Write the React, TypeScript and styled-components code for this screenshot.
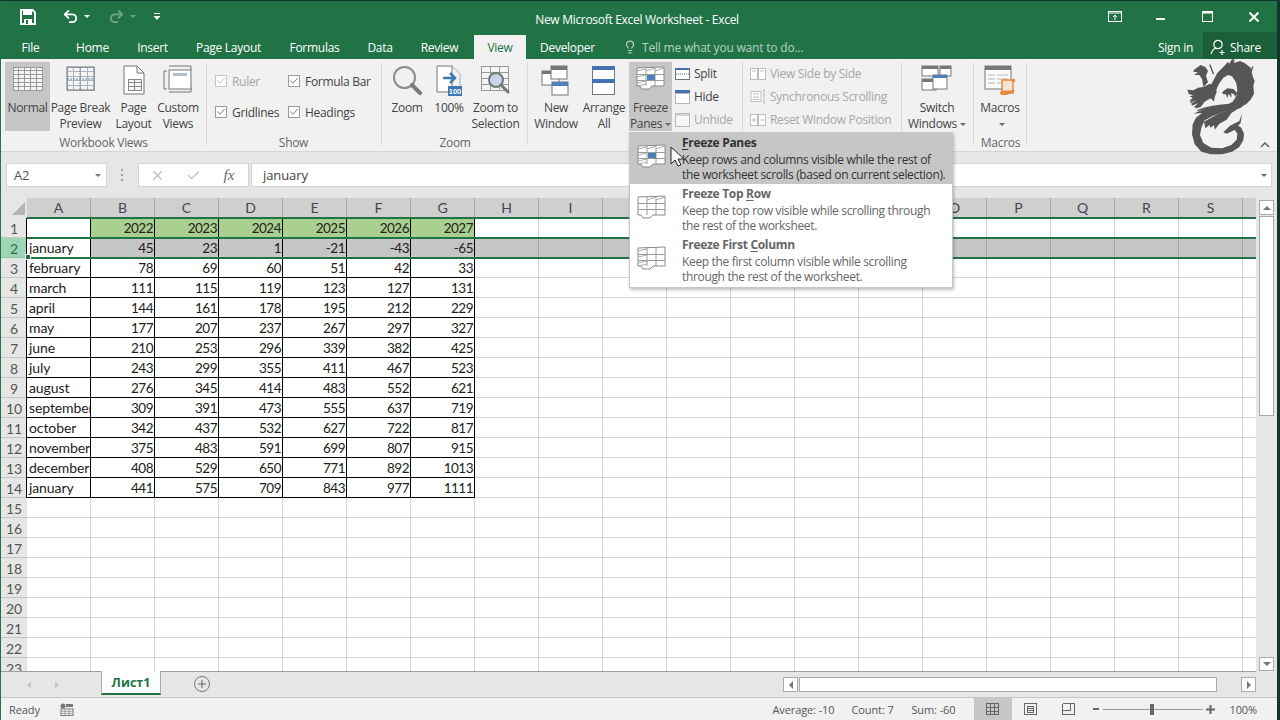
import React from "react";
import styled, { createGlobalStyle } from "styled-components";
import { Undo2, Redo2, Lightbulb, X, Check, Plus } from "lucide-react";

const GlobalStyle = createGlobalStyle`
  html, body { margin: 0; padding: 0; background: #fff; overflow: hidden; }
  * { box-sizing: border-box; }
`;

const UI_FONT = `"Open Sans", "Noto Sans", sans-serif`;
const CELL_FONT = `Lato, "Liberation Sans", sans-serif`;
const GREEN = "#217346";

const Win = styled.div`
  width: 1280px;
  height: 720px;
  display: flex;
  flex-direction: column;
  overflow: hidden;
  background: #f1f1f1;
  border-top: 1px solid #12352c;
  border-left: 1px solid ${GREEN};
  border-right: 3px solid #12352c;
  font-family: ${UI_FONT};
  font-size: 12px;
  color: #444;
`;

const TitleBar = styled.div`
  height: 31px;
  flex: none;
  background: ${GREEN};
  color: #fff;
  display: flex;
  align-items: center;
  position: relative;
`;
const Qat = styled.div`
  display: flex;
  align-items: center;
  padding-left: 19px;
  height: 100%;
`;
const QatSlot = styled.div<{ $w: number; $dim?: boolean }>`
  width: ${(p) => p.$w}px;
  display: flex;
  align-items: center;
  gap: 5px;
  opacity: ${(p) => (p.$dim ? 0.35 : 1)};
`;
const Caret = styled.span<{ $color?: string }>`
  display: inline-block;
  width: 0;
  height: 0;
  border-left: 3px solid transparent;
  border-right: 3px solid transparent;
  border-top: 3px solid ${(p) => p.$color ?? "currentColor"};
`;
const Title = styled.div`
  position: absolute;
  left: 0;
  right: 4px;
  top: 10px;
  text-align: center;
  font-size: 12px;
  letter-spacing: -0.3px;
  color: #fff;
`;
const WinButtons = styled.div`
  margin-left: auto;
  display: flex;
  align-items: center;
`;
const WinButton = styled.div<{ $w: number }>`
  width: ${(p) => p.$w}px;
  display: flex;
  justify-content: center;
`;

const TabRow = styled.div`
  height: 27px;
  flex: none;
  background: ${GREEN};
  color: #fff;
  display: flex;
  align-items: flex-end;
  letter-spacing: -0.28px;
`;
const Tab = styled.div<{ $w: number; $active?: boolean; $gap?: number }>`
  width: ${(p) => p.$w}px;
  margin-left: ${(p) => p.$gap ?? 0}px;
  height: ${(p) => (p.$active ? 24 : 27)}px;
  display: flex;
  align-items: center;
  justify-content: center;
  padding-top: ${(p) => (p.$active ? 0 : 3)}px;
  background: ${(p) => (p.$active ? "#f1f1f1" : "transparent")};
  color: ${(p) => (p.$active ? GREEN : "#fff")};
`;
const TellMe = styled.div`
  display: flex;
  align-items: center;
  gap: 5px;
  height: 27px;
  padding-top: 3px;
  margin-left: 14px;
  color: #b5d0c1;
  letter-spacing: -0.2px;
`;
const SignIn = styled.div`
  margin-left: auto;
  height: 27px;
  padding-top: 3px;
  display: flex;
  align-items: center;
  margin-right: 10px;
`;
const Share = styled.div`
  width: 74px;
  height: 27px;
  padding: 3px 0 0 7px;
  background: #1b5f3a;
  display: flex;
  align-items: center;
  gap: 3px;
`;

const Ribbon = styled.div`
  height: 93px;
  flex: none;
  display: flex;
  position: relative;
  padding: 3px 0 0 4px;
  background: #f1f1f1;
  border-bottom: 1px solid #d6d6d6;
  letter-spacing: -0.3px;
`;
const Group = styled.div<{ $w: number }>`
  width: ${(p) => p.$w}px;
  flex: none;
  display: flex;
  flex-direction: column;
  position: relative;
  &::after {
    content: "";
    position: absolute;
    right: 0;
    top: 1px;
    bottom: 6px;
    width: 1px;
    background: #d8d8d8;
  }
`;
const GroupBody = styled.div<{ $pad?: number }>`
  height: 74px;
  display: flex;
  padding-left: ${(p) => p.$pad ?? 0}px;
`;
const GroupLabel = styled.div<{ $trim?: number }>`
  height: 16px;
  line-height: 16px;
  text-align: center;
  color: #666;
  padding-right: ${(p) => p.$trim ?? 0}px;
`;
const BigButton = styled.div<{ $w: number; $on?: boolean }>`
  width: ${(p) => p.$w}px;
  height: 69px;
  flex: none;
  position: relative;
  background: ${(p) => (p.$on ? "#c6c6c6" : "transparent")};
`;
const IconZone = styled.div`
  height: 38px;
  display: flex;
  align-items: flex-start;
  justify-content: center;
  padding-top: 3px;
`;
const ButtonLabel = styled.div`
  text-align: center;
  line-height: 16px;
  white-space: nowrap;
`;
const DropCaret = styled(Caret)`
  margin-left: 3px;
  vertical-align: 2px;
  color: #666;
`;
const CheckGrid = styled.div`
  display: grid;
  grid-template-columns: 73px auto;
  grid-auto-rows: 30px;
  row-gap: 1px;
  padding: 4px 0 0 8px;
`;
const CheckRow = styled.div<{ $off?: boolean }>`
  display: flex;
  align-items: center;
  gap: 5px;
  color: ${(p) => (p.$off ? "#a6a6a6" : "#444")};
`;
const CheckBox = styled.div<{ $off?: boolean }>`
  width: 12px;
  height: 12px;
  flex: none;
  background: #fff;
  border: 1px solid ${(p) => (p.$off ? "#c6c6c6" : "#9a9a9a")};
  display: flex;
  align-items: center;
  justify-content: center;
  color: ${(p) => (p.$off ? "#b5b5b5" : "#555")};
`;
const SmallColumn = styled.div<{ $w: number; $gap: number; $line?: boolean }>`
  width: ${(p) => p.$w}px;
  margin-left: ${(p) => p.$gap}px;
  height: 69px;
  flex: none;
  ${(p) => (p.$line ? "border-right: 1px solid #d8d8d8;" : "")}
`;
const SmallButton = styled.div<{ $off?: boolean }>`
  height: 23px;
  display: flex;
  align-items: center;
  gap: 3px;
  white-space: nowrap;
  color: ${(p) => (p.$off ? "#a6a6a6" : "#444")};
`;
const DragonSlot = styled.div`
  position: absolute;
  left: 1169px;
  top: -4px;
  width: 110px;
  height: 110px;
  pointer-events: none;
`;
const Collapse = styled.div`
  position: absolute;
  right: 7px;
  bottom: 3px;
  line-height: 0;
`;

const Menu = styled.div`
  position: absolute;
  left: 0;
  top: 70px;
  z-index: 10;
  width: 324px;
  height: 156px;
  background: #fff;
  border: 1px solid #c6c6c6;
  box-shadow: 1px 2px 3px rgba(0, 0, 0, 0.25);
  text-align: left;
  letter-spacing: -0.34px;
`;
const MenuItem = styled.div<{ $on?: boolean }>`
  height: 51px;
  display: flex;
  background: ${(p) => (p.$on ? "#c6c6c6" : "transparent")};
`;
const MenuIcon = styled.div`
  width: 52px;
  flex: none;
  padding: 10px 0 0 7px;
`;
const MenuText = styled.div<{ $on?: boolean }>`
  line-height: 15px;
  color: ${(p) => (p.$on ? "#333" : "#666")};
  padding-top: 2px;
`;
const MenuTitle = styled.div`
  font-weight: 700;
  line-height: 16px;
  margin-bottom: 1px;
  letter-spacing: -0.3px;
  u { text-underline-offset: 2px; }
`;
const MenuLine = styled.div`
  white-space: nowrap;
`;
const Pointer = styled.div`
  position: absolute;
  left: 40px;
  top: 13px;
  line-height: 0;
`;

const FormulaBar = styled.div`
  height: 46px;
  flex: none;
  background: #e6e6e6;
  display: flex;
  padding: 11px 5px 0 5px;
`;
const NameBox = styled.div`
  width: 101px;
  height: 24px;
  background: #fff;
  border: 1px solid #d4d4d4;
  display: flex;
  align-items: center;
  justify-content: space-between;
  padding: 0 5px 0 7px;
  font-size: 13px;
  color: #555;
  letter-spacing: -0.1px;
`;
const GripDots = styled.div`
  width: 31px;
  height: 24px;
  display: flex;
  justify-content: center;
  align-items: center;
  line-height: 0;
`;
const FormulaTools = styled.div`
  width: 111px;
  height: 24px;
  background: #fff;
  border: 1px solid #d4d4d4;
  display: flex;
  align-items: center;
  margin-right: 2px;
`;
const ToolCell = styled.div<{ $w: number }>`
  width: ${(p) => p.$w}px;
  display: flex;
  justify-content: center;
`;
const FxText = styled.span`
  font-family: "Liberation Serif", serif;
  font-style: italic;
  font-size: 15px;
  color: #666;
`;
const FormulaInput = styled.div`
  flex: 1;
  height: 24px;
  background: #fff;
  border: 1px solid #d4d4d4;
  display: flex;
  align-items: center;
  justify-content: space-between;
  padding: 0 4px 0 11px;
  font-size: 13px;
  letter-spacing: -0.1px;
  color: #444;
`;

const SheetArea = styled.div`
  height: 474px;
  flex: none;
  display: flex;
  background: #e6e6e6;
`;
const Sheet = styled.div`
  width: 1255px;
  flex: none;
  overflow: hidden;
  background: #fff;
  border-bottom: 1px solid #9e9e9e;
  font-family: ${CELL_FONT};
  font-size: 14px;
  color: #222;
`;
const HeadRow = styled.div`
  height: 20px;
  display: flex;
  background: #cfcfcf;
  color: #445;
`;
const Corner = styled.div`
  width: 26px;
  flex: none;
  background: #e6e6e6;
  display: flex;
  align-items: flex-end;
  justify-content: flex-end;
  padding: 0 2px 3px 0;
`;
const ColHead = styled.div`
  width: 64px;
  flex: none;
  text-align: center;
  line-height: 20px;
  border-right: 1px solid #a8a8a8;
`;
const Row = styled.div<{ $line?: boolean; $lineBelow?: boolean }>`
  height: 20px;
  display: flex;
  position: relative;
  ${(p) =>
    p.$line
      ? `&::before { content: ""; position: absolute; z-index: 3; left: 26px; right: 0; top: -1px; height: 2px; background: ${GREEN}; }`
      : ""}
  ${(p) =>
    p.$lineBelow
      ? `&::after { content: ""; position: absolute; z-index: 3; left: 26px; right: 0; bottom: -1px; height: 2px; background: ${GREEN}; }`
      : ""}
`;
const RowHead = styled.div<{ $on?: boolean }>`
  width: 26px;
  flex: none;
  text-align: center;
  line-height: 21px;
  background: ${(p) => (p.$on ? "#9fd5b7" : "#e6e6e6")};
  color: ${(p) => (p.$on ? GREEN : "#555")};
  border-bottom: 1px solid ${(p) => (p.$on ? "#8fc5a7" : "#c6c6c6")};
`;
const Cell = styled.div<{ $boxed?: boolean; $tone?: string; $right?: boolean; $first?: boolean }>`
  width: 64px;
  flex: none;
  line-height: ${(p) => (p.$right ? 21 : 20)}px;
  overflow: hidden;
  white-space: nowrap;
  padding: 0 1px 0 2px;
  text-align: ${(p) => (p.$right ? "right" : "left")};
  font-size: ${(p) => (p.$right ? 13.5 : 14)}px;
  letter-spacing: ${(p) => (p.$right ? -0.5 : -0.1)}px;
  background: ${(p) => p.$tone ?? "#fff"};
  border-right: 1px solid ${(p) => (p.$boxed ? "#000" : p.$tone ? "#a6a6a6" : "#d4d4d4")};
  border-bottom: 1px solid ${(p) => (p.$boxed ? "#000" : p.$tone ? "#a6a6a6" : "#d4d4d4")};
  ${(p) => (p.$first ? "box-shadow: -1px 0 0 #000;" : "")}
  position: relative;
`;
const FillHandle = styled.div`
  position: absolute;
  left: 24px;
  top: 16px;
  width: 6px;
  height: 6px;
  background: ${GREEN};
  border: 1px solid #fff;
  z-index: 5;
`;

const VScroll = styled.div`
  flex: 1;
  display: flex;
  flex-direction: column;
  padding: 2px 2px 1px 3px;
`;
const ScrollButton = styled.div<{ $h?: number }>`
  width: 15px;
  height: ${(p) => p.$h ?? 15}px;
  flex: none;
  background: #fff;
  border: 1px solid #ababab;
  display: flex;
  align-items: center;
  justify-content: center;
  color: #777;
`;
const VThumb = styled.div`
  width: 15px;
  height: 200px;
  flex: none;
  background: #fff;
  border: 1px solid #ababab;
  margin-top: 1px;
`;
const VGap = styled.div`
  flex: 1;
`;
const TriUp = styled.span`
  width: 0;
  height: 0;
  border-left: 4px solid transparent;
  border-right: 4px solid transparent;
  border-bottom: 4px solid currentColor;
`;
const TriDown = styled(TriUp)`
  border-bottom: none;
  border-top: 4px solid currentColor;
`;
const TriLeft = styled.span`
  width: 0;
  height: 0;
  border-top: 4px solid transparent;
  border-bottom: 4px solid transparent;
  border-right: 4px solid currentColor;
`;
const TriRight = styled(TriLeft)`
  border-right: none;
  border-left: 4px solid currentColor;
`;

const TabsBar = styled.div`
  height: 26px;
  flex: none;
  background: #e6e6e6;
  border-bottom: 1px solid #c6c6c6;
  display: flex;
  align-items: flex-start;
`;
const NavArrows = styled.div`
  width: 100px;
  height: 25px;
  display: flex;
  align-items: center;
  gap: 24px;
  padding-left: 26px;
  color: #c6c6c6;
`;
const SheetTab = styled.div`
  width: 60px;
  height: 24px;
  padding-top: 1px;
  background: #fff;
  border-bottom: 2px solid ${GREEN};
  border-left: 1px solid #ababab;
  border-right: 1px solid #ababab;
  margin-top: -1px;
  display: flex;
  align-items: center;
  justify-content: center;
  color: ${GREEN};
  font-weight: 700;
  font-size: 12.5px;
`;
const AddSheet = styled.div`
  width: 16px;
  height: 16px;
  margin: 4px 0 0 33px;
  border: 1.5px solid #777;
  border-radius: 50%;
  display: flex;
  align-items: center;
  justify-content: center;
  color: #666;
`;
const HScroll = styled.div`
  margin-left: auto;
  margin-right: 21px;
  display: flex;
  align-items: center;
  height: 25px;
  width: 473px;
`;
const HThumb = styled.div`
  width: 419px;
  height: 15px;
  background: #fff;
  border: 1px solid #ababab;
  margin-left: 1px;
  margin-right: 24px;
`;

const StatusBar = styled.div`
  flex: 1;
  display: flex;
  align-items: center;
  background: #f1f1f1;
  font-size: 11px;
  color: #555;
  padding-left: 8px;
  letter-spacing: -0.1px;
`;
const StatusRight = styled.div`
  margin-left: auto;
  display: flex;
  align-items: center;
  height: 100%;
`;
const StatusText = styled.div<{ $w: number }>`
  width: ${(p) => p.$w}px;
  white-space: nowrap;
`;
const ViewButton = styled.div<{ $on?: boolean }>`
  width: 38px;
  height: 100%;
  display: flex;
  align-items: center;
  justify-content: center;
  background: ${(p) => (p.$on ? "#c6c6c6" : "transparent")};
`;
const Slider = styled.div`
  width: 100px;
  height: 1px;
  background: #9a9a9a;
  margin: 0 1px;
  position: relative;
  &::after {
    content: "";
    position: absolute;
    left: 47px;
    top: -5px;
    width: 4px;
    height: 11px;
    background: #666;
  }
`;
const ZoomLabel = styled.div`
  margin: 0 20px 0 13px;
`;
const ZoomSign = styled.div<{ $gap?: number }>`
  width: 12px;
  margin-left: ${(p) => p.$gap ?? 0}px;
  display: flex;
  justify-content: center;
  color: #666;
  line-height: 0;
`;

/* icons */
const SaveIcon = () => (
  <svg width="16" height="16" viewBox="0 0 16 16">
    <path d="M1 1h11.5L15 3.5V15H1z" fill="none" stroke="#fff" strokeWidth="2" />
    <rect x="3" y="2" width="9" height="4" fill="#fff" />
    <rect x="4" y="10" width="8" height="5" fill="#fff" />
    <rect x="6" y="11" width="2" height="4" fill={GREEN} />
  </svg>
);
const CustomizeIcon = () => (
  <svg width="8" height="8" viewBox="0 0 8 8">
    <rect x="1" y="0" width="6" height="1" fill="#fff" />
    <path d="M0.5 3h7L4 7z" fill="#fff" />
  </svg>
);
const DisplayIcon = () => (
  <svg width="14" height="11" viewBox="0 0 14 11" fill="none" stroke="#fff">
    <rect x="0.5" y="0.5" width="13" height="10" />
    <path d="M0.5 2h13" />
    <path d="M7 9V4M5 6l2-2 2 2" />
  </svg>
);
const MinIcon = () => (
  <svg width="10" height="10" viewBox="0 0 10 10">
    <rect x="0" y="6" width="9" height="2" fill="#fff" />
  </svg>
);
const MaxIcon = () => (
  <svg width="11" height="11" viewBox="0 0 11 11" fill="none" stroke="#fff">
    <rect x="0.5" y="0.5" width="10" height="10" />
    <rect x="0" y="0" width="11" height="2.5" fill="#fff" stroke="none" />
  </svg>
);
const CloseIcon = () => (
  <svg width="10" height="10" viewBox="0 0 10 10" stroke="#fff" strokeWidth="2">
    <path d="M0.5 0.5l9 9M9.5 0.5l-9 9" />
  </svg>
);
const ShareIcon = () => (
  <svg width="17" height="17" viewBox="0 0 17 17" fill="none" stroke="#fff" strokeWidth="1.2">
    <circle cx="8" cy="5.5" r="4.2" />
    <path d="M1 15c1-3 3-5.5 5-6M12 11v5M9.5 13.5h5" />
  </svg>
);

const cols = (x0: number, x1: number, n: number) =>
  Array.from({ length: n + 1 }, (_, i) => x0 + ((x1 - x0) * i) / n);

const SheetGrid = ({ x, y, w, h, c, r, stroke = "#8a8a8a", fill = "#f4f4f4" }: {
  x: number; y: number; w: number; h: number; c: number; r: number; stroke?: string; fill?: string;
}) => (
  <g stroke={stroke} strokeWidth="1" fill="none" shapeRendering="crispEdges">
    <rect x={x} y={y} width={w} height={h} fill={fill} />
    {cols(x, x + w, c).slice(1, -1).map((v) => <path key={v} d={`M${v} ${y}V${y + h}`} />)}
    {cols(y, y + h, r).slice(1, -1).map((v) => <path key={v} d={`M${x} ${v}H${x + w}`} />)}
  </g>
);

const NormalIcon = () => (
  <svg width="32" height="28" viewBox="0 0 32 28">
    <SheetGrid x={1} y={2} w={29} h={23} c={5} r={6} stroke="#999" />
  </svg>
);
const PageBreakIcon = () => (
  <svg width="30" height="28" viewBox="0 0 30 28">
    <SheetGrid x={1} y={2} w={27} h={23} c={4} r={5} stroke="#a9b4be" />
    <rect x="1" y="2" width="27" height="23" fill="none" stroke="#777" />
    <path d="M14 2v23M1 14h27" stroke="#6d86a0" strokeDasharray="2 1" />
  </svg>
);
const PageLayoutIcon = () => (
  <svg width="24" height="30" viewBox="0 0 24 30" fill="none">
    <path d="M2 1h13l7 7v21H2z" fill="#fff" stroke="#777" />
    <path d="M15 1v7h7" stroke="#777" />
    <g transform="translate(-1 0)"><SheetGrid x={7} y={14} w={13} h={11} c={2} r={3} stroke="#888" fill="#f5f5f5" /></g>
  </svg>
);
const CustomViewsIcon = () => (
  <svg width="30" height="30" viewBox="0 0 30 30" fill="none" stroke="#777">
    <path d="M6 1h22M1 6v18M28 1v4M6 27h22v-5" />
    <rect x="6" y="5" width="22" height="19" fill="#fff" />
    <rect x="10" y="8" width="14" height="3" fill="#b4c0cc" stroke="none" />
    <path d="M1 6h3M1 24h3" />
  </svg>
);
const ZoomIcon = () => (
  <svg width="30" height="32" viewBox="0 0 30 32" fill="none">
    <circle cx="12.5" cy="12.5" r="10.5" stroke="#8c8c8c" strokeWidth="2" />
    <path d="M20 20l8 8" stroke="#7a7a7a" strokeWidth="4" strokeLinecap="round" />
  </svg>
);
const HundredIcon = () => (
  <svg width="28" height="32" viewBox="0 0 28 32">
    <path d="M2 1h15v26H2z" fill="#fff" stroke="#777" />
    <path d="M17 1l8 8v15" fill="none" stroke="#8a8aaa" strokeDasharray="2 1" />
    <path d="M8 13h11M15 8l5 5-5 5" fill="none" stroke="#3e78b2" strokeWidth="2.5" />
    <rect x="13" y="21" width="14" height="10" fill="#3e78b2" />
    <text x="20" y="29" fontSize="7.5" fontWeight="700" fill="#fff" textAnchor="middle" fontFamily="Liberation Sans" letterSpacing="0">100</text>
  </svg>
);
const ZoomSelectionIcon = () => (
  <svg width="32" height="30" viewBox="0 0 32 30">
    <SheetGrid x={1} y={1} w={27} h={24} c={3} r={4} stroke="#999" />
    <circle cx="16" cy="15" r="7" fill="#c6d6e6" stroke="#777" strokeWidth="2" />
    <path d="M21 20l7 7" stroke="#777" strokeWidth="3" strokeLinecap="round" />
  </svg>
);
const NewWindowIcon = () => (
  <svg width="30" height="32" viewBox="0 0 30 32">
    <rect x="1" y="6" width="17" height="14" fill="#fff" stroke="#777" />
    <rect x="1" y="6" width="17" height="3" fill="#777" />
    <rect x="10" y="1" width="16" height="13" fill="#fff" stroke="#777" />
    <rect x="10" y="1" width="16" height="4" fill="#777" />
    <rect x="11" y="17" width="16" height="13" fill="#fff" stroke="#777" />
    <rect x="11" y="17" width="16" height="4" fill="#4d7fb8" />
  </svg>
);
const ArrangeIcon = () => (
  <svg width="26" height="32" viewBox="0 0 26 32">
    <rect x="1.5" y="1.5" width="22" height="28" fill="#fff" stroke="#777" />
    <rect x="1" y="1" width="23" height="4" fill="#4472b0" />
    <rect x="1" y="14" width="23" height="4" fill="#4472b0" />
  </svg>
);
const FreezeGlyph = ({ variant }: { variant: "panes" | "row" | "column" }) => (
  <svg width="30" height="28" viewBox="0 0 30 28">
    <path d="M1 3l27-1v19H16l-3 3H6l-2-3H1z" fill="#fff" stroke="#8a8a8a" />
    <path d="M1 9.5h27M1 15.5h27M10 3v18M19 3v18" stroke="#9a9a9a" />
    {variant !== "row" && (
      <path d="M1 6l9-2M1 12l9-2M1 18l9-2M1 21l9-2" stroke="#9fb0a8" />
    )}
    {variant !== "column" && (
      <path d="M10 6l9-3M19 6l9-3" stroke="#aaa" />
    )}
    {variant === "panes" && <rect x="11" y="10" width="8" height="5" fill="#4d7fb8" />}
  </svg>
);
const SplitIcon = () => (
  <svg width="16" height="14" viewBox="0 0 16 14">
    <rect x="0.5" y="1.5" width="14" height="11" fill="#fff" stroke="#777" />
    <rect x="0" y="1" width="15" height="2" fill="#4472b0" />
    <path d="M1 7h13" stroke="#4472b0" strokeDasharray="1 1" />
  </svg>
);
const HideIcon = () => (
  <svg width="16" height="14" viewBox="0 0 16 14">
    <rect x="0" y="0" width="15" height="3" fill="#4472b0" />
    <rect x="0.5" y="3.5" width="14" height="10" fill="#fff" stroke="#777" strokeDasharray="1 1" />
  </svg>
);
const UnhideIcon = () => (
  <svg width="16" height="14" viewBox="0 0 16 14">
    <rect x="0.5" y="0.5" width="14" height="13" fill="#f7f7f7" stroke="#bbb" />
    <rect x="1" y="1" width="13" height="2" fill="#d4d4d4" />
  </svg>
);
const SideBySideIcon = () => (
  <svg width="17" height="14" viewBox="0 0 17 14" fill="#fff" stroke="#bdbdbd">
    <rect x="0.5" y="1.5" width="7" height="11" />
    <rect x="8.5" y="1.5" width="7" height="11" />
    <path d="M2 4h4M10 4h4" />
  </svg>
);
const SyncIcon = () => (
  <svg width="17" height="15" viewBox="0 0 17 15" fill="#fff" stroke="#bdbdbd">
    <rect x="1" y="2.5" width="10" height="10" />
    <path d="M3 5h6M3 8h6M3 10.5h6M14 1v13M13 1h2M13 14h2" />
  </svg>
);
const ResetIcon = () => (
  <svg width="17" height="14" viewBox="0 0 17 14" fill="#fff" stroke="#bdbdbd">
    <rect x="0.5" y="1.5" width="7" height="11" />
    <rect x="8.5" y="1.5" width="7" height="11" />
    <path d="M2 7h4M4 5v4M10 7h4" />
  </svg>
);
const SwitchIcon = () => (
  <svg width="32" height="28" viewBox="0 0 32 28">
    <rect x="1" y="1" width="16" height="10" fill="#fff" stroke="#777" />
    <rect x="1" y="1" width="16" height="3" fill="#777" />
    <rect x="19" y="1" width="11" height="10" fill="#fff" stroke="#777" />
    <rect x="19" y="1" width="11" height="3" fill="#777" />
    <rect x="1" y="14" width="14" height="11" fill="#fff" stroke="#777" />
    <rect x="1" y="14" width="14" height="3" fill="#777" />
    <rect x="12" y="10" width="14" height="14" fill="#fff" stroke="#777" />
    <rect x="12" y="10" width="14" height="3" fill="#4d7fb8" />
  </svg>
);
const MacrosIcon = () => (
  <svg width="32" height="32" viewBox="0 0 32 32">
    <rect x="1" y="1" width="26" height="23" fill="#fafafa" stroke="#777" />
    <rect x="1" y="1" width="26" height="4" fill="#777" />
    <path d="M4 10h7M13 10h11M4 14h7M13 14h11M4 18h7M13 18h4" stroke="#b5b5b5" />
    <rect x="18" y="15" width="11" height="13" fill="#f5e5d2" stroke="#e18b3e" strokeWidth="1.5" />
    <path d="M17 27h10a2 2 0 0 0 2-2" stroke="#e18b3e" strokeWidth="3" fill="none" />
    <rect x="16" y="26" width="9" height="4" rx="2" fill="#e18b3e" />
    <circle cx="29.5" cy="15.5" r="1.8" fill="#e18b3e" />
  </svg>
);
const MacroStatusIcon = () => (
  <svg width="14" height="13" viewBox="0 0 14 13">
    <circle cx="3" cy="3" r="2.5" fill="#777" />
    <rect x="6" y="1" width="7" height="3" fill="#777" />
    <rect x="1" y="6" width="12" height="6.5" fill="#fff" stroke="#777" />
    <path d="M1 8.3h12M1 10.4h12M5 6v6M9 6v6" stroke="#999" />
  </svg>
);
const DragonIcon = () => (
  <svg width="110" height="110" viewBox="0 0 330 330">
    <g fill="#565656">
      <path d="M112 118l12-30 18-34 20-20 12-14 4 8 16-18-2 14 18-6 14 6 18 14 6 26 6 14-4 14 2 24-10 18-14 14-18 6-24 2-16-6 18-10 12-18 2-20-4-20-12-18-12-4-14 8-14 20-10 24-4 28z" />
      <path d="M52 104l18 2 14-8 16-2 20-10 16 8 4 18-6 14-16 6-14 8-12 16-12 4-8-4 12-12-18 8-2-6 14-10-20 2 10-10-10-4 12-2-14-6z" />
      <path d="M72 44l20-14 14 6 8 12-6 14 6 20-14 14-4-24-8-12-16 0 12-8-14-2z" />
      <path d="M156 112l16-12 18 2 12 12-6 12-4-8-8-4 0 14-8-12-4 14-4-12-8 0z" />
      <path d="M70 176l40-18 46-8 72-4-18 14-44 8-36 14-26 14-10 22-4 22 10 24 24 14 32 2 28-10 16-16 2-18-8-12-14-2-6 4 8-14 16-4 16 10 8 18-2 20-12 20-22 14-30 8-34 0-28-8-20-22-8-30 2-30 10-20 18-14z" />
      <path d="M102 200l40-22 60-26 16 0-34 22-14 20-22 12-14 18-2-14-10 8-4-8-12 10z" />
      <path d="M160 232l20-20 28-14 8-22-4 28-20 22-22 10z" />
    </g>
    <g fill="none" stroke="#565656" strokeLinecap="round" strokeWidth="4">
      <path d="M84 166c30-12 62-16 100-18M92 186c30-14 54-18 84-24M62 142l18-12M240 60l8-24M130 56l-10-26M176 34l12-22" />
    </g>
  </svg>
);
const PointerIcon = () => (
  <svg width="16" height="22" viewBox="0 0 16 22">
    <path d="M1 1v17l4-4 3 6 3-1-3-6h6z" fill="#fff" stroke="#222" strokeWidth="1" />
  </svg>
);
const GridViewIcon = () => (
  <svg width="14" height="13" viewBox="0 0 14 13" fill="none" stroke="#666" shapeRendering="crispEdges">
    <rect x="0.5" y="0.5" width="12" height="11" />
    <path d="M4.5 0v12M8.5 0v12M0 4.5h13M0 8.5h13" />
  </svg>
);
const PageViewIcon = () => (
  <svg width="14" height="13" viewBox="0 0 14 13" fill="none" stroke="#666" shapeRendering="crispEdges">
    <rect x="0.5" y="0.5" width="12" height="11" />
    <path d="M3.5 3.5h6v6h-6zM4 5.5h5M4 7.5h5" />
  </svg>
);
const BreakViewIcon = () => (
  <svg width="14" height="13" viewBox="0 0 14 13" fill="none" stroke="#666" shapeRendering="crispEdges">
    <path d="M0.5 0.5h12v11M0.5 0.5v11M0.5 7.5h8v-7" />
    <path d="M0.5 11.5h12" />
  </svg>
);
const MinusSign = () => (
  <svg width="8" height="2" viewBox="0 0 8 2"><rect width="6" height="2" x="1" fill="#666" /></svg>
);
const PlusSign = () => (
  <svg width="9" height="9" viewBox="0 0 9 9"><path d="M4.5 0v9M0 4.5h9" stroke="#666" strokeWidth="2" /></svg>
);

/* data */
const years = [2022, 2023, 2024, 2025, 2026, 2027];
const table: [string, number[]][] = [
  ["january", [45, 23, 1, -21, -43, -65]],
  ["february", [78, 69, 60, 51, 42, 33]],
  ["march", [111, 115, 119, 123, 127, 131]],
  ["april", [144, 161, 178, 195, 212, 229]],
  ["may", [177, 207, 237, 267, 297, 327]],
  ["june", [210, 253, 296, 339, 382, 425]],
  ["july", [243, 299, 355, 411, 467, 523]],
  ["august", [276, 345, 414, 483, 552, 621]],
  ["september", [309, 391, 473, 555, 637, 719]],
  ["october", [342, 437, 532, 627, 722, 817]],
  ["november", [375, 483, 591, 699, 807, 915]],
  ["december", [408, 529, 650, 771, 892, 1013]],
  ["january", [441, 575, 709, 843, 977, 1111]],
];
const letters = "ABCDEFGHIJKLMNOPQRST".split("");
const tabs = [
  { label: "File", w: 59 },
  { label: "Home", w: 65 },
  { label: "Insert", w: 55 },
  { label: "Page Layout", w: 97 },
  { label: "Formulas", w: 75 },
  { label: "Data", w: 56 },
  { label: "Review", w: 63 },
  { label: "View", w: 52, active: true, gap: 3 },
  { label: "Developer", w: 83 },
];

const SheetRows = () => {
  const rows = [];
  for (let r = 1; r <= 23; r++) {
    const isTable = r <= 14;
    const isYear = r === 1;
    const isSel = r === 2;
    const rec = r >= 2 && r <= 14 ? table[r - 2] : null;
    rows.push(
      <Row key={r} $line={r === 1 || r === 2} $lineBelow={r === 2}>
        <RowHead $on={isSel}>{r}</RowHead>
        {letters.map((_, c) => {
          const inTable = isTable && c <= 6;
          let tone: string | undefined;
          if (isYear && c >= 1 && c <= 6) tone = "#a9d08e";
          if (isSel && c >= 1) tone = "#c6c6c6";
          let value: React.ReactNode = null;
          if (isYear && c >= 1 && c <= 6) value = years[c - 1];
          if (rec && c === 0) value = rec[0];
          if (rec && c >= 1 && c <= 6) value = rec[1][c - 1];
          return (
            <Cell key={c} $boxed={inTable} $tone={tone} $right={c > 0} $first={inTable && c === 0}>
              {value}
            </Cell>
          );
        })}
        {isSel && <FillHandle />}
      </Row>
    );
  }
  return <>{rows}</>;
};

const App: React.FC = () => {
  return (
    <Win>
      <GlobalStyle />
      <TitleBar>
        <Qat>
          <QatSlot $w={42}><SaveIcon /></QatSlot>
          <QatSlot $w={46}><Undo2 size={17} strokeWidth={2.6} /><Caret /></QatSlot>
          <QatSlot $w={45} $dim><Redo2 size={17} strokeWidth={2.6} /><Caret /></QatSlot>
          <QatSlot $w={12}><CustomizeIcon /></QatSlot>
        </Qat>
        <Title>New Microsoft Excel Worksheet - Excel</Title>
        <WinButtons>
          <WinButton $w={46}><DisplayIcon /></WinButton>
          <WinButton $w={46}><MinIcon /></WinButton>
          <WinButton $w={47}><MaxIcon /></WinButton>
          <WinButton $w={46}><CloseIcon /></WinButton>
        </WinButtons>
      </TitleBar>
      <TabRow>
        {tabs.map((t) => (
          <Tab key={t.label} $w={t.w} $active={t.active} $gap={t.gap}>{t.label}</Tab>
        ))}
        <TellMe><Lightbulb size={14} />Tell me what you want to do...</TellMe>
        <SignIn>Sign in</SignIn>
        <Share><ShareIcon />Share</Share>
      </TabRow>

      <Ribbon>
        <Group $w={202}>
          <GroupBody>
            <BigButton $w={45} $on><IconZone><NormalIcon /></IconZone><ButtonLabel>Normal</ButtonLabel></BigButton>
            <BigButton $w={61}><IconZone><PageBreakIcon /></IconZone><ButtonLabel>Page Break<br />Preview</ButtonLabel></BigButton>
            <BigButton $w={45}><IconZone><PageLayoutIcon /></IconZone><ButtonLabel>Page<br />Layout</ButtonLabel></BigButton>
            <BigButton $w={44}><IconZone><CustomViewsIcon /></IconZone><ButtonLabel>Custom<br />Views</ButtonLabel></BigButton>
          </GroupBody>
          <GroupLabel $trim={5}>Workbook Views</GroupLabel>
        </Group>
        <Group $w={175}>
          <GroupBody>
            <CheckGrid>
              <CheckRow $off><CheckBox $off><Check size={10} strokeWidth={2} /></CheckBox>Ruler</CheckRow>
              <CheckRow><CheckBox><Check size={10} strokeWidth={2} /></CheckBox>Formula Bar</CheckRow>
              <CheckRow><CheckBox><Check size={10} strokeWidth={2} /></CheckBox>Gridlines</CheckRow>
              <CheckRow><CheckBox><Check size={10} strokeWidth={2} /></CheckBox>Headings</CheckRow>
            </CheckGrid>
          </GroupBody>
          <GroupLabel $trim={2}>Show</GroupLabel>
        </Group>
        <Group $w={146}>
          <GroupBody $pad={3}>
            <BigButton $w={44}><IconZone><ZoomIcon /></IconZone><ButtonLabel>Zoom</ButtonLabel></BigButton>
            <BigButton $w={40}><IconZone><HundredIcon /></IconZone><ButtonLabel>100%</ButtonLabel></BigButton>
            <BigButton $w={53}><IconZone><ZoomSelectionIcon /></IconZone><ButtonLabel>Zoom to<br />Selection</ButtonLabel></BigButton>
          </GroupBody>
          <GroupLabel>Zoom</GroupLabel>
        </Group>
        <Group $w={446}>
          <GroupBody $pad={5}>
            <BigButton $w={46}><IconZone><NewWindowIcon /></IconZone><ButtonLabel>New<br />Window</ButtonLabel></BigButton>
            <BigButton $w={50}><IconZone><ArrangeIcon /></IconZone><ButtonLabel>Arrange<br />All</ButtonLabel></BigButton>
            <BigButton $w={43} $on>
              <IconZone><FreezeGlyph variant="panes" /></IconZone>
              <ButtonLabel>Freeze<br />Panes<DropCaret /></ButtonLabel>
              <Menu>
                <MenuItem $on>
                  <MenuIcon><FreezeGlyph variant="panes" /></MenuIcon>
                  <MenuText $on>
                    <MenuTitle><u>F</u>reeze Panes</MenuTitle>
                    <MenuLine>Keep rows and columns visible while the rest of</MenuLine>
                    <MenuLine>the worksheet scrolls (based on current selection).</MenuLine>
                  </MenuText>
                </MenuItem>
                <MenuItem>
                  <MenuIcon><FreezeGlyph variant="row" /></MenuIcon>
                  <MenuText>
                    <MenuTitle>Freeze Top <u>R</u>ow</MenuTitle>
                    <MenuLine>Keep the top row visible while scrolling through</MenuLine>
                    <MenuLine>the rest of the worksheet.</MenuLine>
                  </MenuText>
                </MenuItem>
                <MenuItem>
                  <MenuIcon><FreezeGlyph variant="column" /></MenuIcon>
                  <MenuText>
                    <MenuTitle>Freeze First <u>C</u>olumn</MenuTitle>
                    <MenuLine>Keep the first column visible while scrolling</MenuLine>
                    <MenuLine>through the rest of the worksheet.</MenuLine>
                  </MenuText>
                </MenuItem>
                <Pointer><PointerIcon /></Pointer>
              </Menu>
            </BigButton>
            <SmallColumn $w={68} $gap={3} $line>
              <SmallButton><SplitIcon />Split</SmallButton>
              <SmallButton><HideIcon />Hide</SmallButton>
              <SmallButton $off><UnhideIcon />Unhide</SmallButton>
            </SmallColumn>
            <SmallColumn $w={152} $gap={7} $line>
              <SmallButton $off><SideBySideIcon />View Side by Side</SmallButton>
              <SmallButton $off><SyncIcon />Synchronous Scrolling</SmallButton>
              <SmallButton $off><ResetIcon />Reset Window Position</SmallButton>
            </SmallColumn>
            <BigButton $w={70}>
              <IconZone><SwitchIcon /></IconZone>
              <ButtonLabel>Switch<br />Windows<DropCaret /></ButtonLabel>
            </BigButton>
          </GroupBody>
          <GroupLabel>&nbsp;</GroupLabel>
        </Group>
        <Group $w={53}>
          <GroupBody $pad={4}>
            <BigButton $w={44}>
              <IconZone><MacrosIcon /></IconZone>
              <ButtonLabel>Macros<br /><DropCaret /></ButtonLabel>
            </BigButton>
          </GroupBody>
          <GroupLabel>Macros</GroupLabel>
        </Group>
        <DragonSlot><DragonIcon /></DragonSlot>
        <Collapse>
          <svg width="10" height="6" viewBox="0 0 10 6" fill="none" stroke="#666" strokeWidth="1.6">
            <path d="M1 5l4-4 4 4" />
          </svg>
        </Collapse>
      </Ribbon>

      <FormulaBar>
        <NameBox>A2<Caret $color="#777" /></NameBox>
        <GripDots>
          <svg width="3" height="13" viewBox="0 0 3 13" fill="#a0a0a0">
            <rect y="0" width="2" height="2" /><rect y="5" width="2" height="2" /><rect y="10" width="2" height="2" />
          </svg>
        </GripDots>
        <FormulaTools>
          <ToolCell $w={36}><X size={15} color="#bcbcbc" strokeWidth={2} /></ToolCell>
          <ToolCell $w={36}><Check size={15} color="#bcbcbc" strokeWidth={2} /></ToolCell>
          <ToolCell $w={36}><FxText>fx</FxText></ToolCell>
        </FormulaTools>
        <FormulaInput>january<Caret $color="#666" /></FormulaInput>
      </FormulaBar>

      <SheetArea>
        <Sheet>
          <HeadRow>
            <Corner>
              <svg width="13" height="13" viewBox="0 0 13 13"><path d="M13 0v13H0z" fill="#b5b5b5" /></svg>
            </Corner>
            {letters.map((l, i) => (
              <ColHead key={l}>{i < 19 ? l : ""}</ColHead>
            ))}
          </HeadRow>
          <SheetRows />
        </Sheet>
        <VScroll>
          <ScrollButton><TriUp /></ScrollButton>
          <VThumb />
          <VGap />
          <ScrollButton $h={14}><TriDown /></ScrollButton>
        </VScroll>
      </SheetArea>

      <TabsBar>
        <NavArrows><TriLeft /><TriRight /></NavArrows>
        <SheetTab>Лист1</SheetTab>
        <AddSheet><Plus size={12} strokeWidth={2.2} /></AddSheet>
        <HScroll>
          <ScrollButton><TriLeft /></ScrollButton>
          <HThumb />
          <ScrollButton><TriRight /></ScrollButton>
        </HScroll>
      </TabsBar>

      <StatusBar>
        <StatusText $w={51}>Ready</StatusText>
        <MacroStatusIcon />
        <StatusRight>
          <StatusText $w={79}>Average: -10</StatusText>
          <StatusText $w={60}>Count: 7</StatusText>
          <StatusText $w={63}>Sum: -60</StatusText>
          <ViewButton $on><GridViewIcon /></ViewButton>
          <ViewButton><PageViewIcon /></ViewButton>
          <ViewButton><BreakViewIcon /></ViewButton>
          <ZoomSign $gap={2}><MinusSign /></ZoomSign>
          <Slider />
          <ZoomSign><PlusSign /></ZoomSign>
          <ZoomLabel>100%</ZoomLabel>
        </StatusRight>
      </StatusBar>
    </Win>
  );
};

export default App;
